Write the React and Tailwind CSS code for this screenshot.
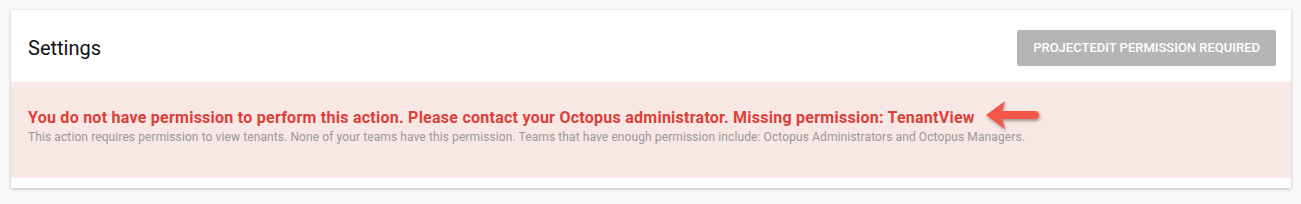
import React from 'react';

const Arrow = () => (
  <svg width="60" height="36" viewBox="0 0 60 36" className="ml-[8px] -mt-1" style={{ filter: 'drop-shadow(1px 2px 1.5px rgba(0,0,0,0.35))' }}>
    <path d="M3 17 L22 3 L19 13 L52 13 Q56 13 56 17 Q56 21 52 21 L19 21 L22 31 Z" fill="#f4574a" />
  </svg>
);

export default function App() {
  return (
    <div className="min-h-[204px] w-full bg-[#f8f8f8] pt-[10px] pl-[11px] pr-[10px]" style={{ fontFamily: 'Roboto, "Liberation Sans", sans-serif' }}>
      <div className="bg-white shadow-[0_1px_3px_rgba(0,0,0,0.25)] pb-[10px]">
        <div className="flex items-center justify-between h-[72px] pt-[4px] pl-[17px] pr-[15px]">
          <h2 className="text-[20px] text-[#111] font-normal">Settings</h2>
          <button className="h-[36px] px-[16px] bg-[#b5b5b5] text-white text-[13px] font-medium rounded-[2px] uppercase">
            ProjectEdit permission required
          </button>
        </div>
        <div className="bg-[#f7e7e5] h-[96px] pl-[17px] pt-[20px]">
          <div className="flex items-center">
            <p className="text-[16px] font-bold text-[#dd4037] tracking-[0.25px]">
              You do not have permission to perform this action. Please contact your Octopus administrator. Missing permission: TenantView
            </p>
            <Arrow />
          </div>
          <p className="text-[12px] text-[#999] tracking-[0.1px] -mt-[6px]">
            This action requires permission to view tenants. None of your teams have this permission. Teams that have enough permission include: Octopus Administrators and Octopus Managers.
          </p>
        </div>
      </div>
    </div>
  );
}
